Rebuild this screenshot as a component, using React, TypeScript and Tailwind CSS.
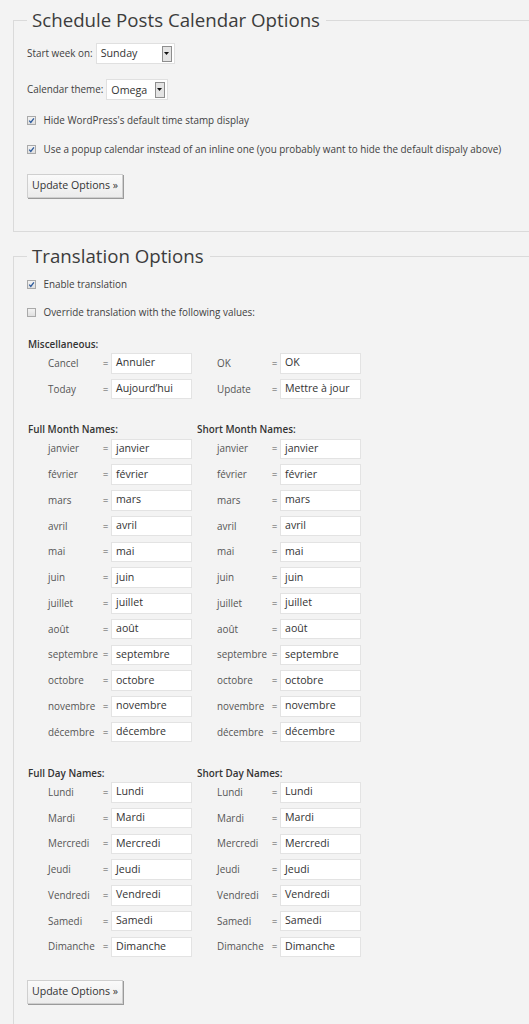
import React from "react";

type Pair = [string, string];

function Check({ checked }: { checked: boolean }) {
  return (
    <svg width="9" height="9" viewBox="0 0 9 9" className="shrink-0">
      <defs>
        <linearGradient id="cbg" x1="0" y1="0" x2="0" y2="1">
          <stop offset="0" stopColor="#f4f4f4" />
          <stop offset="1" stopColor="#dedede" />
        </linearGradient>
      </defs>
      <rect x="0.5" y="0.5" width="8" height="8" fill="url(#cbg)" stroke="#a9a9a9" />
      {checked && (
        <path d="M2.2 4.6 L3.8 6.4 L6.9 2.3" fill="none" stroke="#2c5a9c" strokeWidth="1.3" />
      )}
    </svg>
  );
}

function CheckRow({ checked, label, className }: { checked: boolean; label: string; className: string }) {
  return (
    <div className={`flex h-[16px] items-center ${className}`}>
      <Check checked={checked} />
      <span className="ml-[7.5px] whitespace-nowrap text-[9.9px] text-[#3f3f3f]">{label}</span>
    </div>
  );
}

function Select({ value, width }: { value: string; width: string }) {
  return (
    <div
      className={`relative ml-[3px] flex h-[21px] items-center border border-[#e0e0e0] bg-white pl-[4px] text-[10.7px] text-[#333] ${width}`}
    >
      <span>{value}</span>
      <div className="absolute right-[2.5px] top-[1.5px] flex h-[16px] w-[10px] items-center justify-center border border-[#8e8e8e] bg-[#e4e4e4]">
        <svg width="5" height="3" viewBox="0 0 5 3">
          <path d="M0 0 L5 0 L2.5 3 Z" fill="#111" />
        </svg>
      </div>
    </div>
  );
}

function Button() {
  return (
    <div className="flex h-[23.5px] w-[96px] items-center justify-center border border-[#cfcfcf] bg-gradient-to-b from-[#fafafa] to-[#ececec] text-[10.6px] text-[#333] shadow-[1px_1px_0_#9a9a9a]">
      Update Options »
    </div>
  );
}

function Row({ pair }: { pair: Pair }) {
  return (
    <div className="flex h-[25.75px] items-center pl-[20px]">
      <span className="w-[52px] whitespace-nowrap text-[9.9px] text-[#555]">{pair[0]}</span>
      <span className="w-[11px] text-center text-[9.9px] text-[#555]">=</span>
      <div className="flex h-[20.5px] w-[81px] items-center border border-[#e3e3e3] bg-white pl-[4px] text-[10.6px] text-[#333]">
        {pair[1]}
      </div>
    </div>
  );
}

function Group({ title, rows }: { title: string; rows: Pair[] }) {
  return (
    <div>
      <div className="h-[14px] whitespace-nowrap text-[9.9px] font-semibold leading-[14px] text-[#333]">{title}</div>
      {rows.map((r) => (
        <Row key={r[0]} pair={r} />
      ))}
    </div>
  );
}

function Section({
  className,
  left,
  right,
}: {
  className: string;
  left: { title: string; rows: Pair[] };
  right: { title: string; rows: Pair[] };
}) {
  return (
    <div className={`grid grid-cols-[169px_1fr] pl-[1px] ${className}`}>
      <Group title={left.title} rows={left.rows} />
      <Group title={right.title} rows={right.rows} />
    </div>
  );
}

const months = [
  "janvier",
  "février",
  "mars",
  "avril",
  "mai",
  "juin",
  "juillet",
  "août",
  "septembre",
  "octobre",
  "novembre",
  "décembre",
];
const days = ["Lundi", "Mardi", "Mercredi", "Jeudi", "Vendredi", "Samedi", "Dimanche"];
const same = (a: string[]): Pair[] => a.map((x) => [x, x] as Pair);

export default function App() {
  return (
    <div className="h-[1024px] w-[529px] overflow-hidden bg-[#f3f3f3] font-['Open_Sans',sans-serif] text-[#444]">
      <fieldset className="ml-[13px] mt-[7px] border-y border-l border-[#dadada] pb-[33px] pl-[13px]">
        <legend className="pb-[2px] pl-[5px] pr-[6px] text-[18.7px] font-medium leading-[25.5px] text-[#3c3c3c]">
          Schedule Posts Calendar Options
        </legend>
        <div className="mt-[8.5px] flex h-[21px] items-center">
          <span className="text-[9.9px] text-[#3f3f3f]">Start week on:</span>
          <Select value="Sunday" width="w-[79.5px]" />
        </div>
        <div className="mt-[15px] flex h-[21.5px] items-center">
          <span className="text-[9.9px] text-[#3f3f3f]">Calendar theme:</span>
          <Select value="Omega" width="w-[62px]" />
        </div>
        <CheckRow className="mt-[12px]" checked label="Hide WordPress's default time stamp display" />
        <CheckRow
          className="mt-[12.5px]"
          checked
          label="Use a popup calendar instead of an inline one (you probably want to hide the default dispaly above)"
        />
        <div className="mt-[17px]">
          <Button />
        </div>
      </fieldset>

      <fieldset className="ml-[13px] mt-[11px] border-y border-l border-[#dadada] pb-[60px] pl-[13px]">
        <legend className="pb-[2px] pl-[5px] pr-[6px] text-[18.7px] font-medium leading-[25.5px] text-[#3c3c3c]">
          Translation Options
        </legend>
        <CheckRow className="mt-[6.5px]" checked label="Enable translation" />
        <CheckRow className="mt-[11.5px]" checked={false} label="Override translation with the following values:" />
        <Section
          className="mt-[16.5px]"
          left={{
            title: "Miscellaneous:",
            rows: [
              ["Cancel", "Annuler"],
              ["Today", "Aujourd’hui"],
            ],
          }}
          right={{
            title: "",
            rows: [
              ["OK", "OK"],
              ["Update", "Mettre à jour"],
            ],
          }}
        />
        <Section
          className="mt-[20px]"
          left={{ title: "Full Month Names:", rows: same(months) }}
          right={{ title: "Short Month Names:", rows: same(months) }}
        />
        <Section
          className="mt-[20.5px]"
          left={{ title: "Full Day Names:", rows: same(days) }}
          right={{ title: "Short Day Names:", rows: same(days) }}
        />
        <div className="mt-[20.5px]">
          <Button />
        </div>
      </fieldset>
    </div>
  );
}
